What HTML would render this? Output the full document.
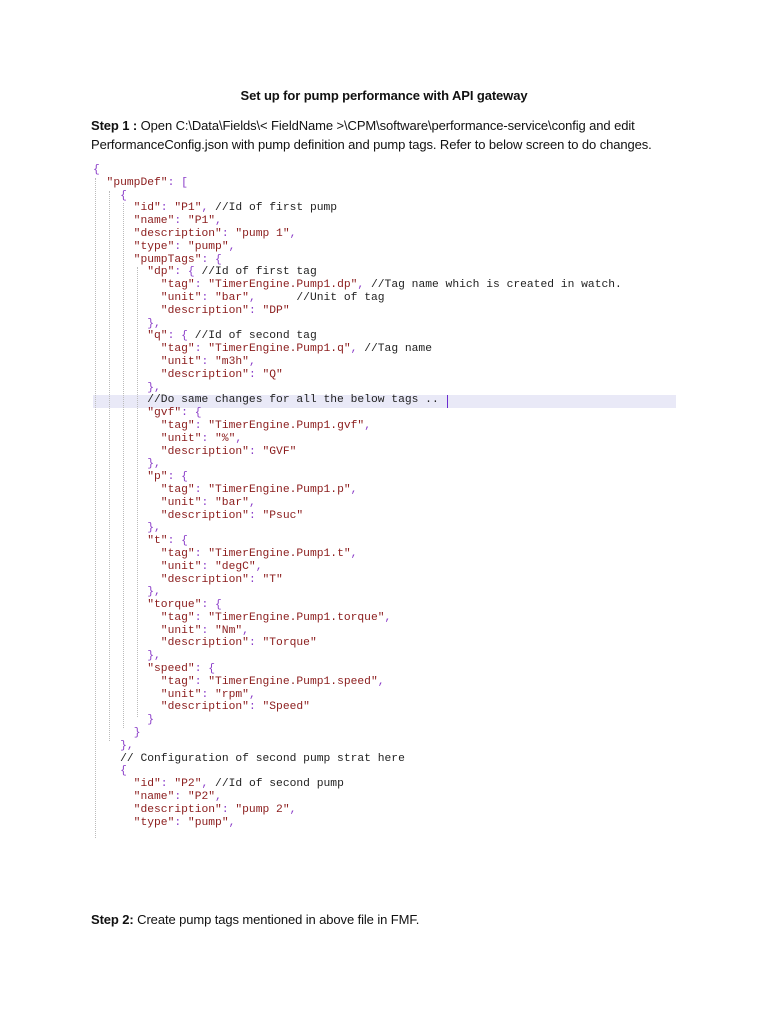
<!DOCTYPE html>
<html><head><meta charset="utf-8"><style>
body{margin:0;width:768px;height:1024px;background:#fff;position:relative;overflow:hidden;font-family:"Liberation Sans",sans-serif;color:#111}
.t{position:absolute;white-space:nowrap;font-size:13px;letter-spacing:-0.1px}
#code{position:absolute;left:93px;top:164px;margin:0;font:11.3px/12.8px "Liberation Mono",monospace;color:#8b1c1c;white-space:pre}
.p{color:#8a3cc8}.c{color:#222}
#hl{position:absolute;left:93px;top:395px;width:583px;height:13px;background:#e9e9f7}
#cur{position:absolute;left:447px;top:395px;width:1px;height:13px;background:#6a2bd0}
.g{position:absolute;border-left:1px dotted #bbb}
</style></head><body>
<div class="t" style="left:0;width:768px;text-align:center;top:88px;font-weight:bold">Set up for pump performance with API gateway</div>
<div class="t" style="left:91px;top:118px"><b>Step 1 :</b> Open C:\Data\Fields\&lt; FieldName &gt;\CPM\software\performance-service\config and edit</div>
<div class="t" style="left:91px;top:137px">PerformanceConfig.json with pump definition and pump tags. Refer to below screen to do changes.</div>
<div id="hl"></div><div id="cur"></div>
<div class="g" style="left:95px;top:178px;height:660px"></div>
<div class="g" style="left:109px;top:191px;height:550px"></div>
<div class="g" style="left:123px;top:203px;height:525px"></div>
<div class="g" style="left:137px;top:267px;height:450px"></div>
<pre id="code"><span class="p">{</span>
  "pumpDef"<span class="p">: [</span>
    <span class="p">{</span>
      "id"<span class="p">:</span> "P1"<span class="p">,</span> <span class="c">//Id of first pump</span>
      "name"<span class="p">:</span> "P1"<span class="p">,</span>
      "description"<span class="p">:</span> "pump 1"<span class="p">,</span>
      "type"<span class="p">:</span> "pump"<span class="p">,</span>
      "pumpTags"<span class="p">: {</span>
        "dp"<span class="p">: {</span> <span class="c">//Id of first tag</span>
          "tag"<span class="p">:</span> "TimerEngine.Pump1.dp"<span class="p">,</span> <span class="c">//Tag name which is created in watch.</span>
          "unit"<span class="p">:</span> "bar"<span class="p">,</span>      <span class="c">//Unit of tag</span>
          "description"<span class="p">:</span> "DP"
        <span class="p">},</span>
        "q"<span class="p">: {</span> <span class="c">//Id of second tag</span>
          "tag"<span class="p">:</span> "TimerEngine.Pump1.q"<span class="p">,</span> <span class="c">//Tag name</span>
          "unit"<span class="p">:</span> "m3h"<span class="p">,</span>
          "description"<span class="p">:</span> "Q"
        <span class="p">},</span>
        <span class="c">//Do same changes for all the below tags ..</span>
        "gvf"<span class="p">: {</span>
          "tag"<span class="p">:</span> "TimerEngine.Pump1.gvf"<span class="p">,</span>
          "unit"<span class="p">:</span> "%"<span class="p">,</span>
          "description"<span class="p">:</span> "GVF"
        <span class="p">},</span>
        "p"<span class="p">: {</span>
          "tag"<span class="p">:</span> "TimerEngine.Pump1.p"<span class="p">,</span>
          "unit"<span class="p">:</span> "bar"<span class="p">,</span>
          "description"<span class="p">:</span> "Psuc"
        <span class="p">},</span>
        "t"<span class="p">: {</span>
          "tag"<span class="p">:</span> "TimerEngine.Pump1.t"<span class="p">,</span>
          "unit"<span class="p">:</span> "degC"<span class="p">,</span>
          "description"<span class="p">:</span> "T"
        <span class="p">},</span>
        "torque"<span class="p">: {</span>
          "tag"<span class="p">:</span> "TimerEngine.Pump1.torque"<span class="p">,</span>
          "unit"<span class="p">:</span> "Nm"<span class="p">,</span>
          "description"<span class="p">:</span> "Torque"
        <span class="p">},</span>
        "speed"<span class="p">: {</span>
          "tag"<span class="p">:</span> "TimerEngine.Pump1.speed"<span class="p">,</span>
          "unit"<span class="p">:</span> "rpm"<span class="p">,</span>
          "description"<span class="p">:</span> "Speed"
        <span class="p">}</span>
      <span class="p">}</span>
    <span class="p">},</span>
    <span class="c">// Configuration of second pump strat here</span>
    <span class="p">{</span>
      "id"<span class="p">:</span> "P2"<span class="p">,</span> <span class="c">//Id of second pump</span>
      "name"<span class="p">:</span> "P2"<span class="p">,</span>
      "description"<span class="p">:</span> "pump 2"<span class="p">,</span>
      "type"<span class="p">:</span> "pump"<span class="p">,</span></pre>
<div class="t" style="left:91px;top:912px"><b>Step 2:</b> Create pump tags mentioned in above file in FMF.</div>
</body></html>
